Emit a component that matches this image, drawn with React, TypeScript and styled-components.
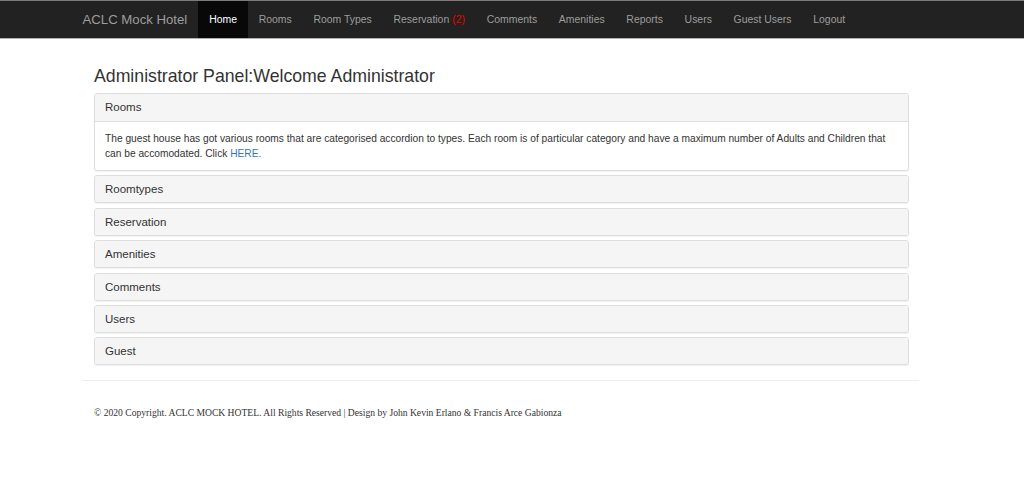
import styled, { createGlobalStyle } from "styled-components";

const GlobalStyle = createGlobalStyle`
  html, body {
    margin: 0;
    padding: 0;
    background: #fff;
  }
  body {
    font-family: "Liberation Sans", Arial, sans-serif;
    font-size: 10.2px;
    color: #333;
  }
`;

const Navbar = styled.nav`
  height: 39px;
  background-color: #222;
  border-top: 1px solid #7a7a7a;
  border-bottom: 1px solid #b0b0b0;
  box-sizing: border-box;
`;

const NavInner = styled.div`
  display: flex;
  align-items: stretch;
  height: 100%;
  margin-left: 71px;
`;

const Brand = styled.a`
  display: flex;
  align-items: center;
  padding: 0 11px 0 11.5px;
  font-size: 13.2px;
  color: #9d9d9d;
  text-decoration: none;
`;

const NavLink = styled.a<{ $active?: boolean }>`
  display: flex;
  align-items: center;
  padding: 0 10.85px;
  font-size: 10.45px;
  text-decoration: none;
  color: ${(p) => (p.$active ? "#fff" : "#9d9d9d")};
  background-color: ${(p) => (p.$active ? "#080808" : "transparent")};
  .badge {
    color: #e00;
    margin-left: 3px;
  }
`;

const Container = styled.div`
  width: 837px;
  margin-left: 83px;
  padding: 0 11px;
  box-sizing: border-box;
`;

const Title = styled.h1`
  font-size: 17.7px;
  font-weight: 400;
  margin: 26px 0 6px;
  line-height: 22px;
`;

const PanelGroup = styled.div`
  display: flex;
  flex-direction: column;
  gap: 4.4px;
`;

const Panel = styled.div`
  border: 1px solid #ddd;
  border-radius: 3px;
  background: #fff;
  box-shadow: 0 1px 1px rgba(0, 0, 0, 0.06);
  overflow: hidden;
`;

const PanelHeading = styled.div<{ $open?: boolean }>`
  background-color: #f5f5f5;
  padding: 7px 10px ${(p) => (p.$open ? "7px" : "6px")};
  font-size: 11.5px;
  line-height: 13px;
  color: #333;
  border-bottom: ${(p) => (p.$open ? "1px solid #ddd" : "none")};
`;

const PanelBody = styled.div`
  padding: 9px 10px 9px;
  font-size: 10.2px;
  line-height: 15px;
  a {
    color: #337ab7;
    text-decoration: none;
  }
`;

const Rule = styled.hr`
  width: 836px;
  margin: 15px 0 0 83px;
  border: 0;
  border-top: 1px solid #eee;
`;

const Footer = styled.footer`
  padding: 26px 0 0;
  font-family: "Liberation Serif", "Times New Roman", serif;
  font-size: 9.6px;
  color: #333;
`;

const links = [
  "Rooms",
  "Room Types",
  "Reservation",
  "Comments",
  "Amenities",
  "Reports",
  "Users",
  "Guest Users",
  "Logout",
];

const sections = ["Roomtypes", "Reservation", "Amenities", "Comments", "Users", "Guest"];

export default function App() {
  return (
    <>
      <GlobalStyle />
      <Navbar>
        <NavInner>
          <Brand href="#">ACLC Mock Hotel</Brand>
          <NavLink href="#" $active>
            Home
          </NavLink>
          {links.map((l) => (
            <NavLink href="#" key={l}>
              {l}
              {l === "Reservation" && <span className="badge">(2)</span>}
            </NavLink>
          ))}
        </NavInner>
      </Navbar>
      <Container>
        <Title>Administrator Panel:Welcome Administrator</Title>
        <PanelGroup>
          <Panel>
            <PanelHeading $open>Rooms</PanelHeading>
            <PanelBody>
              The guest house has got various rooms that are categorised accordion to types. Each room is of
              particular category and have a maximum number of Adults and Children that can be accomodated.
              Click <a href="#">HERE.</a>
            </PanelBody>
          </Panel>
          {sections.map((s) => (
            <Panel key={s}>
              <PanelHeading>{s}</PanelHeading>
            </Panel>
          ))}
        </PanelGroup>
      </Container>
      <Rule />
      <Container>
        <Footer>
          © 2020 Copyright. ACLC MOCK HOTEL. All Rights Reserved | Design by John Kevin Erlano &amp; Francis
          Arce Gabionza
        </Footer>
      </Container>
    </>
  );
}
